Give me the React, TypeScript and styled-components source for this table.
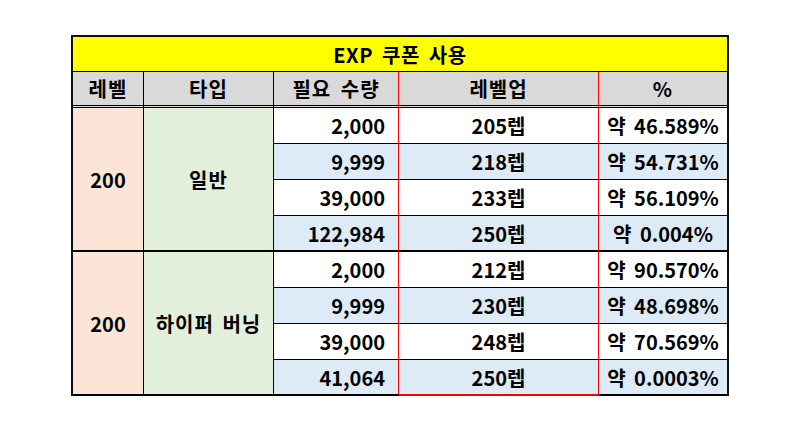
import React from 'react'
import styled, { createGlobalStyle } from 'styled-components'

const GlobalStyle = createGlobalStyle`
  body {
    margin: 0;
    background: #ffffff;
    font-family: 'Noto Sans CJK KR', 'Noto Sans', sans-serif;
  }
`

interface Row {
  need: string
  level: string
  percent: string
}

interface Group {
  level: string
  type: string
  rows: Row[]
}

const groups: Group[] = [
  {
    level: '200',
    type: '일반',
    rows: [
      { need: '2,000', level: '205렙', percent: '약 46.589%' },
      { need: '9,999', level: '218렙', percent: '약 54.731%' },
      { need: '39,000', level: '233렙', percent: '약 56.109%' },
      { need: '122,984', level: '250렙', percent: '약 0.004%' },
    ],
  },
  {
    level: '200',
    type: '하이퍼 버닝',
    rows: [
      { need: '2,000', level: '212렙', percent: '약 90.570%' },
      { need: '9,999', level: '230렙', percent: '약 48.698%' },
      { need: '39,000', level: '248렙', percent: '약 70.569%' },
      { need: '41,064', level: '250렙', percent: '약 0.0003%' },
    ],
  },
]

const RED = '#ff0000'
const LINE = '#000000'

export default function App() {
  return (
    <Page>
      <GlobalStyle />
      <Sheet>
        <colgroup>
          <col style={{ width: 71 }} />
          <col style={{ width: 130 }} />
          <col style={{ width: 125 }} />
          <col style={{ width: 200 }} />
          <col style={{ width: 128 }} />
        </colgroup>
        <tbody>
          <tr>
            <Title colSpan={5}>EXP 쿠폰 사용</Title>
          </tr>
          <tr>
            <Head>레벨</Head>
            <Head>타입</Head>
            <Head $right={RED}>필요 수량</Head>
            <Head $right={RED}>레벨업</Head>
            <Head $right='none'>%</Head>
          </tr>
          {groups.map((g, gi) =>
            g.rows.map((r, ri) => {
              const blue = ri % 2 === 1
              const groupEnd = ri === g.rows.length - 1
              const last = groupEnd && gi === groups.length - 1
              const bg = blue ? '#ddebf7' : '#ffffff'
              return (
                <tr key={`${gi}-${ri}`}>
                  {ri === 0 && (
                    <>
                      <Cell rowSpan={4} $bg='#fce4d6' $bottom={2}>
                        {g.level}
                      </Cell>
                      <Cell rowSpan={4} $bg='#e2efda' $bottom={2} $korean>
                        {g.type}
                      </Cell>
                    </>
                  )}
                  <Cell $bg={bg} $align='right' $right={RED} $bottom={groupEnd ? 2 : 1}>
                    {r.need}
                  </Cell>
                  <Cell
                    $bg={bg}
                    $right={RED}
                    $bottom={groupEnd ? 2 : 1}
                    $bottomColor={last ? RED : LINE}
                  >
                    {r.level}
                  </Cell>
                  <Cell $bg={bg} $right='none' $bottom={groupEnd ? 2 : 1}>
                    {r.percent}
                  </Cell>
                </tr>
              )
            })
          )}
        </tbody>
      </Sheet>
    </Page>
  )
}

const Page = styled.div`
  display: flex;
  justify-content: center;
  padding-top: 35px;
`

const Sheet = styled.table`
  border-collapse: separate;
  border-spacing: 0;
  table-layout: fixed;
  width: 658px;
  border: 2px solid #111;
  border-bottom: none;
  color: #000;
  font-size: 20px;
  font-weight: 700;
  word-spacing: 4px;
`

const Title = styled.td`
  box-sizing: border-box;
  height: 35px;
  padding: 0;
  background: #ffff00;
  border-bottom: 1px solid ${LINE};
  text-align: center;
  vertical-align: middle;
  letter-spacing: 0.5px;
  word-spacing: 4px;
`

const Head = styled.td<{ $right?: string }>`
  box-sizing: border-box;
  height: 36px;
  padding: 0;
  background: #d9d9d9;
  border-right: ${(p) => (p.$right === 'none' ? 'none' : `1px solid ${p.$right ?? LINE}`)};
  border-bottom: 3px double ${LINE};
  text-align: center;
  vertical-align: middle;
  letter-spacing: 1px;
  word-spacing: 4px;
`

const Cell = styled.td<{
  $bg: string
  $align?: 'center' | 'right'
  $right?: string
  $bottom: number
  $bottomColor?: string
  $korean?: boolean
}>`
  box-sizing: border-box;
  height: 36px;
  padding: ${(p) => (p.$align === 'right' ? '0 13px 0 0' : '0')};
  background: ${(p) => p.$bg};
  border-right: ${(p) => (p.$right === 'none' ? 'none' : `1px solid ${p.$right ?? LINE}`)};
  border-bottom: ${(p) => `${p.$bottom}px solid ${p.$bottomColor ?? LINE}`};
  text-align: ${(p) => p.$align ?? 'center'};
  vertical-align: middle;
  white-space: nowrap;
  letter-spacing: ${(p) => (p.$korean ? '1px' : 'normal')};
  word-spacing: ${(p) => (p.$korean ? '3px' : '4px')};
`
